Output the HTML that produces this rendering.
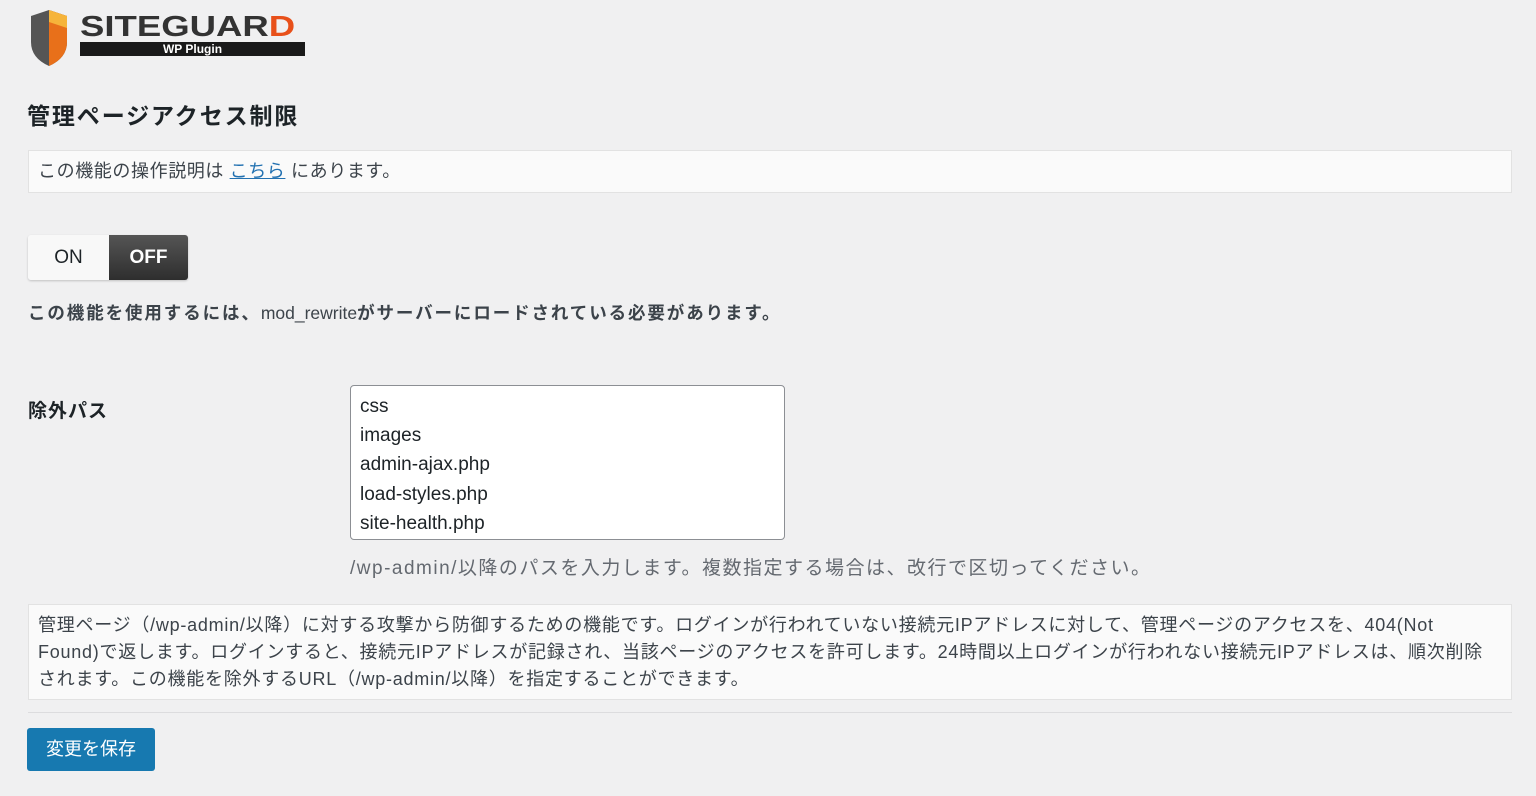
<!DOCTYPE html>
<html><head><meta charset="utf-8"><style>
body{margin:0;background:#f0f0f1;font-family:"Liberation Sans","Noto Sans CJK JP",sans-serif;color:#1d2327;width:1536px;height:796px;overflow:hidden;position:relative}
.a{position:absolute}
</style></head><body>
<div class="a" style="left:27px;top:8px;width:44px;height:60px">
<svg width="44" height="60" viewBox="0 0 44 60"><path d="M4 8 L22 2 L40 8 L40 34 Q40 50 22 58 Q4 50 4 34 Z" fill="#555"/><path d="M22 2 L40 8 L40 34 Q40 50 22 58 Z" fill="#e8701a"/><path d="M22 2 L40 8 L40 20 L22 14Z" fill="#f6b43a"/></svg></div>
<div class="a" style="left:80px;top:12px;font-size:29px;letter-spacing:0px;color:#333;font-weight:bold;line-height:30px;transform:scaleX(1.26);transform-origin:0 0">SITEGUAR<span style="color:#e8501a">D</span></div>
<div class="a" style="left:80px;top:42px;width:225px;height:14px;background:#1a1a1a;color:#fff;font-size:12px;font-weight:bold;text-align:center;line-height:14px">WP Plugin</div>
<div class="a" style="left:27px;top:97px;font-size:23px;font-weight:bold;letter-spacing:1.9px">管理ページアクセス制限</div>
<div class="a" style="left:28px;top:150px;width:1484px;height:43px;background:#fafafa;border:1px solid #e2e2e2;box-sizing:border-box;font-size:18px;line-height:41px;padding-left:9px;color:#3c434a;letter-spacing:0.6px">この機能の操作説明は <span style="color:#2271b1;text-decoration:underline">こちら</span> にあります。</div>
<div class="a" style="left:28px;top:235px;width:160px;height:45px;border-radius:3px;overflow:hidden;box-shadow:0 1px 2px rgba(0,0,0,.2)">
<div class="a" style="left:0;top:0;width:81px;height:45px;background:#f8f8f8;font-size:19px;line-height:45px;text-align:center">ON</div>
<div class="a" style="left:81px;top:0;width:79px;height:45px;background:linear-gradient(#555,#2e2e2e);color:#fff;font-size:19px;font-weight:bold;line-height:45px;text-align:center">OFF</div></div>
<div class="a" style="left:28px;top:300px;font-size:17.5px;font-weight:bold;color:#3c434a;letter-spacing:1.9px">この機能を使用するには、<span style="font-weight:normal;letter-spacing:0">mod_rewrite</span>がサーバーにロードされている必要があります。</div>
<div class="a" style="left:28px;top:396px;font-size:19px;font-weight:bold;letter-spacing:1px">除外パス</div>
<div class="a" style="left:350px;top:385px;width:435px;height:155px;background:#fff;border:1px solid #8c8f94;border-radius:4px;box-sizing:border-box;padding:6px 9px;font-size:19px;line-height:29.2px">css<br>images<br>admin-ajax.php<br>load-styles.php<br>site-health.php</div>
<div class="a" style="left:350px;top:553px;font-size:19px;color:#646970;letter-spacing:1.5px">/wp-admin/以降のパスを入力します。複数指定する場合は、改行で区切ってください。</div>
<div class="a" style="left:28px;top:604px;width:1484px;height:96px;background:#fafafa;border:1px solid #e2e2e2;box-sizing:border-box;font-size:18px;line-height:27px;padding:7px 9px;color:#3c434a;letter-spacing:0.75px;white-space:nowrap">管理ページ（/wp-admin/以降）に対する攻撃から防御するための機能です。ログインが行われていない接続元IPアドレスに対して、管理ページのアクセスを、404(Not<br>Found)で返します。ログインすると、接続元IPアドレスが記録され、当該ページのアクセスを許可します。24時間以上ログインが行われない接続元IPアドレスは、順次削除<br>されます。この機能を除外するURL（/wp-admin/以降）を指定することができます。</div>
<div class="a" style="left:28px;top:712px;width:1484px;height:1px;background:#dcdcde"></div>
<div class="a" style="left:27px;top:728px;width:128px;height:43px;background:#1779b0;border-radius:3px;color:#fff;font-size:18px;line-height:43px;text-align:center">変更を保存</div>
</body></html>
